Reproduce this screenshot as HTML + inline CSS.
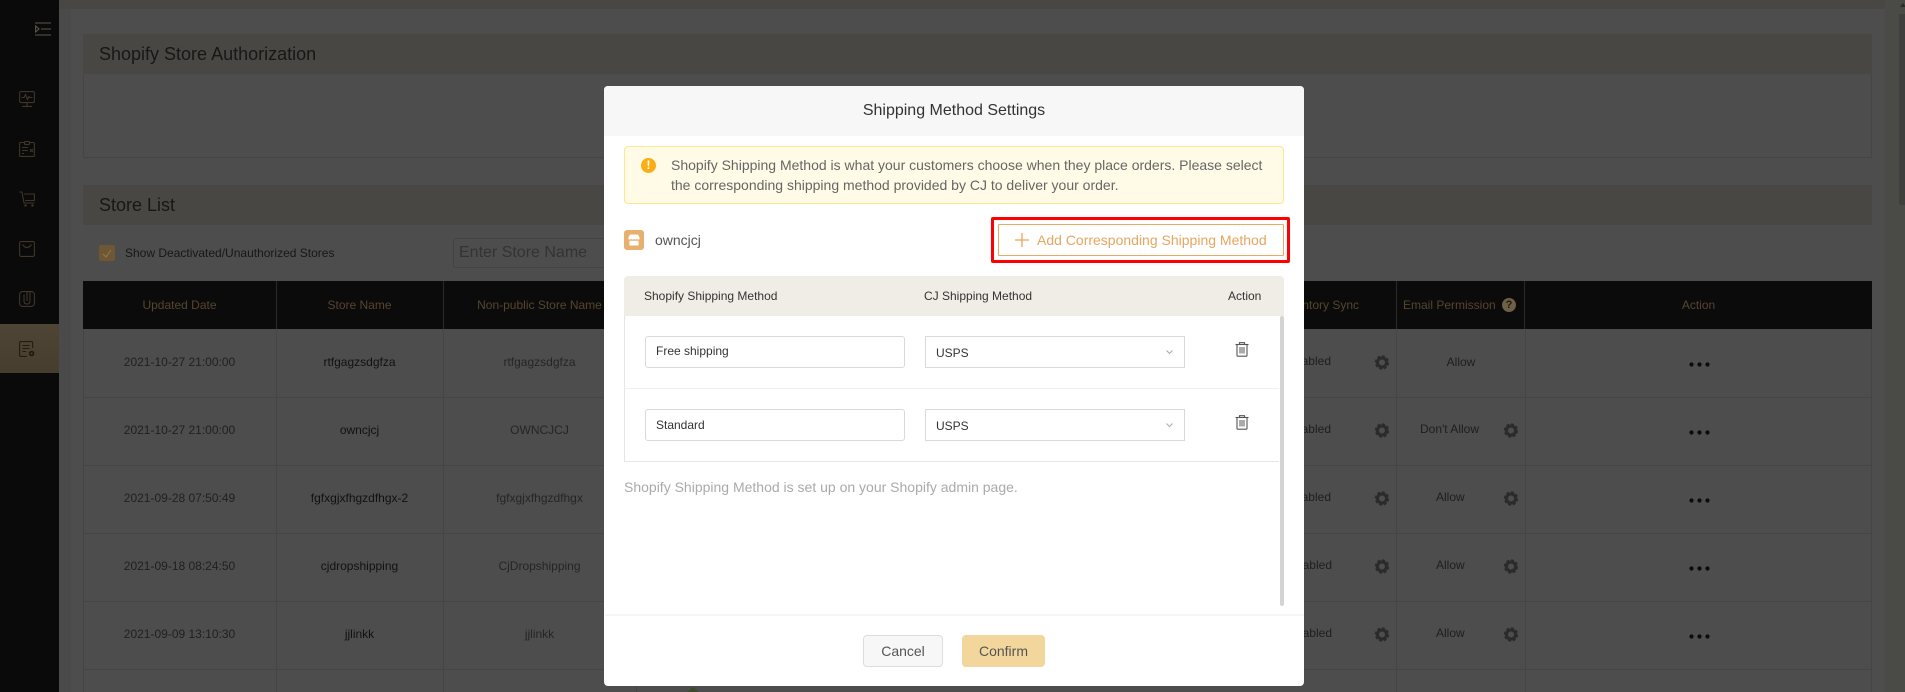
<!DOCTYPE html>
<html><head><meta charset="utf-8"><title>Shipping Method Settings</title>
<style>
html,body{margin:0;padding:0;width:1905px;height:692px;overflow:hidden;background:#4a4a4a;font-family:"Liberation Sans",sans-serif;font-size:12px}
.a{position:absolute;white-space:nowrap}
.c{text-align:center}
.hl{background:#2a2a2a;width:1px;top:281px;height:48px;position:absolute}
.vl{background:#454545;width:1px;top:329px;height:363px;position:absolute}
.rl{background:#454545;height:1px;left:83px;width:1789px;position:absolute}
.th{color:#54462f;top:296px;height:18px;line-height:18px}
.d{color:#202020;left:83px;width:193px}
.n{color:#111;left:276px;width:167px}
.p{color:#252525;left:443px;width:193px}
.e{color:#1e1e1e;left:1200px;width:131px;text-align:right}
.al{color:#1e1e1e}
svg{position:absolute;display:block;overflow:visible}
.ic{fill:none;stroke:#3f3628;stroke-width:1.1}
</style></head><body>
<svg width="0" height="0" style="left:0;top:0"><defs>
<g id="gear"><circle cx="7" cy="7.5" r="4.5" fill="none" stroke="#2b2b2b" stroke-width="3"/><circle cx="7" cy="7.5" r="6.4" fill="none" stroke="#2b2b2b" stroke-width="1.6" stroke-dasharray="3 2"/></g>
<g id="dots" fill="#0b0b0b"><circle cx="2.5" cy="2.5" r="2.1"/><circle cx="10.5" cy="2.5" r="2.1"/><circle cx="18.5" cy="2.5" r="2.1"/></g>
<g id="trash" fill="none" stroke="#555" stroke-width="1.1"><path d="M0.5 2.5H13.5"/><path d="M4.5 2.5V0.7H9.5V2.5"/><path d="M2 2.5V13.2Q2 14.2 3 14.2H11Q12 14.2 12 13.2V2.5"/><path d="M5 5V11.5M7 5V11.5M9 5V11.5" stroke-width="1"/></g>
</defs></svg>

<!-- page background -->
<div class="a" style="left:59px;top:0;width:1846px;height:9px;background:#484744"></div>
<div class="a" style="left:71px;top:9px;width:1814px;height:683px;background:#4d4d4d"></div>
<div class="a" style="left:1885px;top:0;width:20px;height:692px;background:#4a4a46"></div>
<div class="a" style="left:1899px;top:14px;width:6px;height:191px;background:#3f3f3d"></div>
<div class="a" style="left:1900px;top:3px;width:0;height:0;border:3px solid transparent;border-bottom:4px solid #2c2c2a;border-top:0"></div>

<!-- sidebar -->
<div class="a" style="left:0;top:0;width:59px;height:692px;background:#0a0a0a"></div>
<div class="a" style="left:0;top:324px;width:59px;height:49px;background:linear-gradient(#4e4535,#473d2e)"></div>
<svg class="ic" style="left:35px;top:22px;stroke:#5c564a" width="16" height="14"><path d="M0 1H16M6 7H16M0 13H16M0.6 4V10L4 7Z"/></svg>
<svg class="ic" style="left:19px;top:91px" width="16" height="16"><rect x=".6" y=".6" width="14.8" height="11" rx="1.5"/><path d="M8 11.6V15M3 15.4H13M2.5 6.5H5L6.5 3.5L8.5 8.5L10 5.5L11 6.5H13.5"/></svg>
<svg class="ic" style="left:19px;top:141px" width="16" height="16"><path d="M5 1.5H1.8Q.6 1.5.6 2.7V14.2Q.6 15.4 1.8 15.4H14.2Q15.4 15.4 15.4 14.2V2.7Q15.4 1.5 14.2 1.5H11"/><rect x="5.5" y=".6" width="5" height="3" rx="1"/><path d="M3 6.5H9M3 9.5H9M3 12.5H5M11 8L14 11M14 8L11 11"/></svg>
<svg class="ic" style="left:19px;top:191px" width="17" height="16"><path d="M.5 1H3L5 12H15.4M5 3H15.4V9.5H6"/><circle cx="6.5" cy="14.5" r=".7"/><circle cx="13.5" cy="14.5" r=".7"/></svg>
<svg class="ic" style="left:19px;top:241px" width="16" height="16"><rect x=".6" y=".6" width="14.8" height="14.8" rx="1.5"/><path d="M3.5 3.5Q8 9.5 12.5 3.5"/></svg>
<svg class="ic" style="left:19px;top:291px" width="16" height="16"><rect x=".6" y=".6" width="14.8" height="14.8" rx="3"/><path d="M5 3.5V10Q5 13 8 13Q11 13 11 10V1M8 .6V10"/></svg>
<svg class="ic" style="left:19px;top:341px;stroke:#211c12" width="16" height="16"><path d="M13.6 7V2Q13.6 .6 12.2 .6H2Q.6 .6.6 2V14Q.6 15.4 2 15.4H8M3.5 4.5H10.5M3.5 7.5H10.5M3.5 10.5H7"/><circle cx="12.6" cy="12.5" r="1.9" stroke-width="1.8"/></svg>

<!-- sections -->
<div class="a" style="left:83px;top:34px;width:1789px;height:40px;background:#484744"></div>
<div class="a" style="left:99px;top:34px;height:40px;line-height:40px;font-size:18px;color:#171717">Shopify Store Authorization</div>
<div class="a" style="left:83px;top:74px;width:1787px;height:83px;border:1px solid #454545;border-top:0"></div>
<div class="a" style="left:83px;top:185px;width:1789px;height:40px;background:#484744"></div>
<div class="a" style="left:99px;top:185px;height:40px;line-height:40px;font-size:18px;color:#171717">Store List</div>
<div class="a" style="left:99px;top:245px;width:16px;height:16px;background:#6f5734;border-radius:2px"></div>
<svg style="left:102px;top:249px" width="10" height="9"><path d="M1 5L4 8L9 1" fill="none" stroke="#8d7a55" stroke-width="1"/></svg>
<div class="a" style="left:125px;top:244px;height:18px;line-height:18px;color:#171717">Show Deactivated/Unauthorized Stores</div>
<div class="a" style="left:453px;top:238px;width:160px;height:28px;border:1px solid #444;border-radius:3px"></div>
<div class="a" style="left:459px;top:238px;height:30px;line-height:30px;font-size:16px;color:#333">Enter Store Name</div>

<!-- table -->
<div class="a" style="left:83px;top:281px;width:1789px;height:48px;background:#0b0b0b"></div>
<div class="hl" style="left:276px"></div><div class="hl" style="left:443px"></div><div class="hl" style="left:1396px"></div><div class="hl" style="left:1524px"></div>
<div class="vl" style="left:83px"></div><div class="vl" style="left:276px"></div><div class="vl" style="left:443px"></div><div class="vl" style="left:636px"></div><div class="vl" style="left:1396px"></div><div class="vl" style="left:1525px"></div><div class="vl" style="left:1871px"></div>
<div class="rl" style="top:397px"></div><div class="rl" style="top:465px"></div><div class="rl" style="top:533px"></div><div class="rl" style="top:601px"></div><div class="rl" style="top:669px"></div>
<div class="a c th" style="left:83px;width:193px">Updated Date</div>
<div class="a c th" style="left:276px;width:167px">Store Name</div>
<div class="a c th" style="left:443px;width:193px">Non-public Store Name</div>
<div class="a th" style="left:1259px;width:100px;text-align:right">Inventory Sync</div>
<div class="a th" style="left:1403px">Email Permission</div>
<div class="a c" style="left:1502px;top:298px;width:14px;height:14px;line-height:14px;border-radius:50%;background:#6e5f47;color:#1f1b12;font-size:11px;font-weight:bold">?</div>
<div class="a c th" style="left:1525px;width:347px">Action</div>

<div class="a c d" style="top:353px;line-height:18px">2021-10-27 21:00:00</div><div class="a c n" style="top:353px;line-height:18px">rtfgagzsdgfza</div><div class="a c p" style="top:353px;line-height:18px">rtfgagzsdgfza</div>
<div class="a c d" style="top:421px;line-height:18px">2021-10-27 21:00:00</div><div class="a c n" style="top:421px;line-height:18px">owncjcj</div><div class="a c p" style="top:421px;line-height:18px">OWNCJCJ</div>
<div class="a c d" style="top:489px;line-height:18px">2021-09-28 07:50:49</div><div class="a c n" style="top:489px;line-height:18px">fgfxgjxfhgzdfhgx-2</div><div class="a c p" style="top:489px;line-height:18px">fgfxgjxfhgzdfhgx</div>
<div class="a c d" style="top:557px;line-height:18px">2021-09-18 08:24:50</div><div class="a c n" style="top:557px;line-height:18px">cjdropshipping</div><div class="a c p" style="top:557px;line-height:18px">CjDropshipping</div>
<div class="a c d" style="top:625px;line-height:18px">2021-09-09 13:10:30</div><div class="a c n" style="top:625px;line-height:18px">jjlinkk</div><div class="a c p" style="top:625px;line-height:18px">jjlinkk</div>

<div class="a e" style="top:352px;line-height:18px">abled</div><div class="a e" style="top:420px;line-height:18px">abled</div><div class="a e" style="top:488px;line-height:18px">abled</div><div class="a e" style="top:556px;line-height:18px;width:132px">abled</div><div class="a e" style="top:624px;line-height:18px;width:132px">abled</div>
<div class="a al" style="left:1397px;width:128px;text-align:center;top:353px;line-height:18px">Allow</div>
<div class="a al" style="left:1420px;top:420px;line-height:18px">Don't Allow</div>
<div class="a al" style="left:1436px;top:488px;line-height:18px">Allow</div>
<div class="a al" style="left:1436px;top:556px;line-height:18px">Allow</div>
<div class="a al" style="left:1436px;top:624px;line-height:18px">Allow</div>

<svg style="left:1375px;top:355px" width="14" height="15"><use href="#gear"/></svg>
<svg style="left:1375px;top:423px" width="14" height="15"><use href="#gear"/></svg>
<svg style="left:1375px;top:491px" width="14" height="15"><use href="#gear"/></svg>
<svg style="left:1375px;top:559px" width="14" height="15"><use href="#gear"/></svg>
<svg style="left:1375px;top:627px" width="14" height="15"><use href="#gear"/></svg>
<svg style="left:1504px;top:423px" width="14" height="15"><use href="#gear"/></svg>
<svg style="left:1504px;top:491px" width="14" height="15"><use href="#gear"/></svg>
<svg style="left:1504px;top:559px" width="14" height="15"><use href="#gear"/></svg>
<svg style="left:1504px;top:627px" width="14" height="15"><use href="#gear"/></svg>
<svg style="left:1689px;top:362px" width="21" height="5"><use href="#dots"/></svg>
<svg style="left:1689px;top:430px" width="21" height="5"><use href="#dots"/></svg>
<svg style="left:1689px;top:498px" width="21" height="5"><use href="#dots"/></svg>
<svg style="left:1689px;top:566px" width="21" height="5"><use href="#dots"/></svg>
<svg style="left:1689px;top:634px" width="21" height="5"><use href="#dots"/></svg>
<svg style="left:686px;top:687px" width="14" height="5"><path d="M7 0L0 6H14Z" fill="#3f4a2c"/></svg>

<!-- modal -->
<div class="a" style="left:604px;top:86px;width:700px;height:600px;background:#fff;border-radius:4px"></div>
<div class="a c" style="left:604px;top:86px;width:700px;height:50px;line-height:50px;background:#f7f7f7;border-radius:4px 4px 0 0;font-size:16px;color:#333">Shipping Method Settings</div>

<div class="a" style="left:624px;top:146px;width:658px;height:56px;background:#fffbe6;border:1px solid #ffe58f;border-radius:4px"></div>
<div class="a c" style="left:641px;top:158px;width:15px;height:15px;line-height:15px;border-radius:50%;background:#faad14;color:#fff;font-size:12px;font-weight:bold">!</div>
<div class="a" style="left:671px;top:155px;line-height:20px;font-size:14px;color:#666">Shopify Shipping Method is what your customers choose when they place orders. Please select<br>the corresponding shipping method provided by CJ to deliver your order.</div>

<div class="a" style="left:624px;top:230px;width:20px;height:20px;background:#e8b06e;border-radius:3px"></div>
<svg style="left:628px;top:234px" width="12" height="12"><path d="M2 .5H10L11.7 4Q11.7 5.6 10.2 5.6Q9 5.6 8.8 4.8Q8.4 5.6 7.4 5.6Q6.4 5.6 6 4.8Q5.6 5.6 4.6 5.6Q3.6 5.6 3.2 4.8Q3 5.6 1.8 5.6Q.3 5.6.3 4Z" fill="#fff"/><rect x="1.4" y="6.8" width="9.2" height="4.7" rx=".5" fill="#fff"/></svg>
<div class="a" style="left:655px;top:230px;line-height:20px;font-size:14px;color:#555">owncjcj</div>

<div class="a" style="left:991px;top:217px;width:293px;height:40px;border:3px solid #f00;border-radius:2px"></div>
<div class="a" style="left:998px;top:224px;width:284px;height:30px;border:1px solid #e8ab66;border-radius:1px"></div>
<svg style="left:1015px;top:233px" width="14" height="14"><path d="M7 0V14M0 7H14" stroke="#e6a65f" stroke-width="1.3" fill="none"/></svg>
<div class="a" style="left:1037px;top:231px;line-height:18px;font-size:14px;color:#e6a65f">Add Corresponding Shipping Method</div>

<div class="a" style="left:624px;top:276px;width:660px;height:40px;background:#f0ede6;border-radius:4px 4px 0 0"></div>
<div class="a" style="left:644px;top:287px;line-height:18px;color:#333">Shopify Shipping Method</div>
<div class="a" style="left:924px;top:287px;line-height:18px;color:#333">CJ Shipping Method</div>
<div class="a" style="left:1228px;top:287px;line-height:18px;color:#333">Action</div>
<div class="a" style="left:624px;top:316px;width:1px;height:146px;background:#e5e5e5"></div>
<div class="a" style="left:624px;top:388px;width:655px;height:1px;background:#f0f0f0"></div>
<div class="a" style="left:624px;top:461px;width:655px;height:1px;background:#e5e5e5"></div>
<div class="a" style="left:1280px;top:316px;width:4px;height:290px;background:#d4d4d4;border-radius:2px"></div>

<div class="a" style="left:645px;top:336px;width:258px;height:30px;border:1px solid #d9d9d9;border-radius:3px"></div>
<div class="a" style="left:656px;top:342px;line-height:18px;color:#333">Free shipping</div>
<div class="a" style="left:925px;top:336px;width:258px;height:30px;border:1px solid #d9d9d9"></div>
<div class="a" style="left:936px;top:344px;line-height:18px;color:#333">USPS</div>
<svg style="left:1166px;top:350px" width="7" height="5"><path d="M.5 .5L3.5 3.5L6.5 .5" fill="none" stroke="#aaa"/></svg>
<svg style="left:1235px;top:342px" width="14" height="15"><use href="#trash"/></svg>

<div class="a" style="left:645px;top:409px;width:258px;height:30px;border:1px solid #d9d9d9;border-radius:3px"></div>
<div class="a" style="left:656px;top:416px;line-height:18px;color:#333">Standard</div>
<div class="a" style="left:925px;top:409px;width:258px;height:30px;border:1px solid #d9d9d9"></div>
<div class="a" style="left:936px;top:417px;line-height:18px;color:#333">USPS</div>
<svg style="left:1166px;top:423px" width="7" height="5"><path d="M.5 .5L3.5 3.5L6.5 .5" fill="none" stroke="#aaa"/></svg>
<svg style="left:1235px;top:415px" width="14" height="15"><use href="#trash"/></svg>

<div class="a" style="left:624px;top:478px;line-height:18px;font-size:14px;color:#aaa">Shopify Shipping Method is set up on your Shopify admin page.</div>

<div class="a" style="left:605px;top:614px;width:699px;height:2px;background:#f5f5f5"></div>
<div class="a c" style="left:863px;top:635px;width:78px;height:30px;line-height:30px;background:#f7f7f7;border:1px solid #ddd;border-radius:4px;font-size:14px;color:#555">Cancel</div>
<div class="a c" style="left:962px;top:635px;width:83px;height:32px;line-height:32px;background:#f2d69b;border-radius:4px;font-size:14px;color:#555">Confirm</div>
</body></html>
